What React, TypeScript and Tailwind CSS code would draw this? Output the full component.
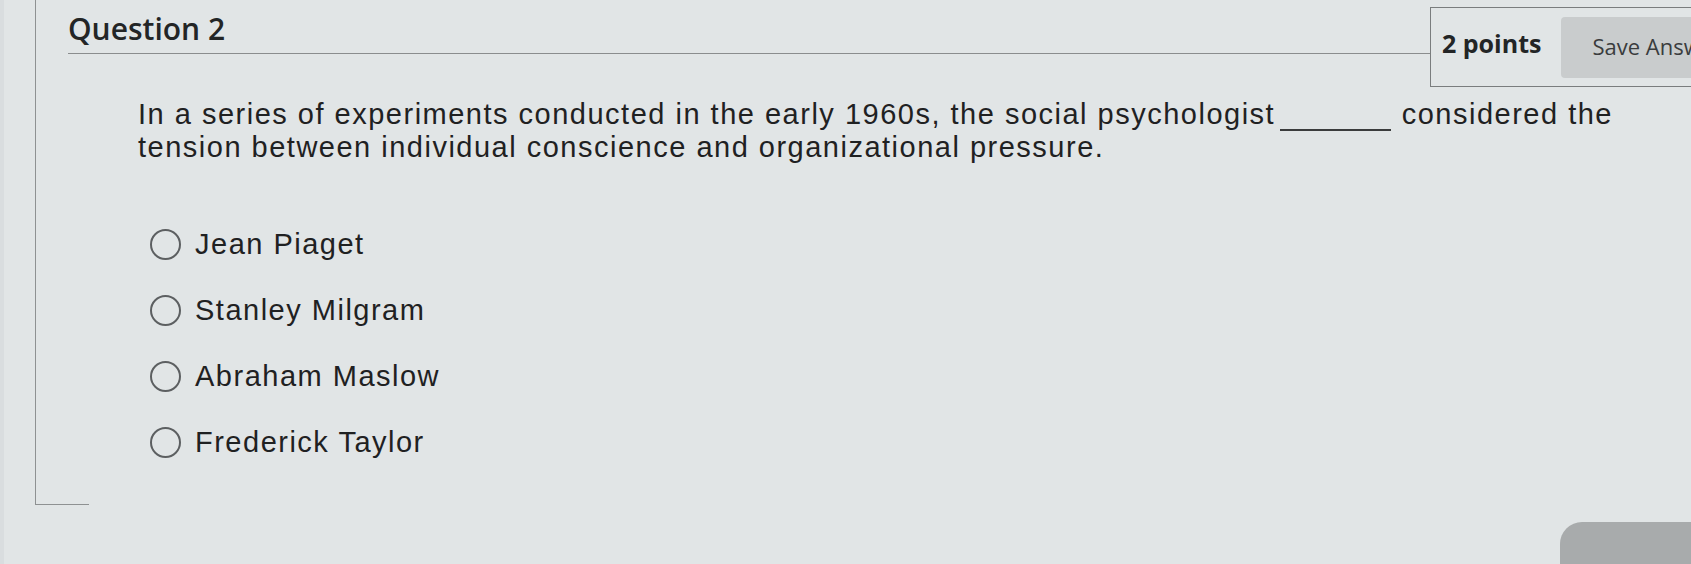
const OPTIONS = ['Jean Piaget', 'Stanley Milgram', 'Abraham Maslow', 'Frederick Taylor'];

function Option({ label }: { label: string }) {
  return (
    <label className="flex h-[66px] items-center gap-[14px] pl-[114px]">
      <span className="h-[31px] w-[31px] shrink-0 rounded-full border-2 border-[#5c5f61]" />
      <span className="text-[29px] leading-[32px] tracking-[1.5px] text-[#1f2122]">{label}</span>
    </label>
  );
}

export default function App() {
  return (
    <div className="relative flex h-[564px] w-[1691px] overflow-hidden bg-[#e1e5e6] font-['Liberation_Sans',Arial,sans-serif]">
      <div className="w-[4px] shrink-0 bg-[#d9dddf]" />

      <div className="ml-[31px] flex h-[505px] min-w-0 flex-1 flex-col border-l border-[#8e9192] pt-[7px]">
        {/* question header + points box */}
        <div className="flex items-start">
          <div className="ml-[32px] h-[47px] flex-1 border-b border-[#8a8d8e] pt-[5px]">
            <h2 className="font-['Open_Sans',sans-serif] text-[30px] font-semibold leading-[34px] text-[#232526]">
              Question 2
            </h2>
          </div>
          <div className="-mr-[40px] flex h-[80px] w-[301px] shrink-0 items-center gap-[20px] border border-[#7a7d7e] pl-[11px]">
            <span className="mb-[8px] font-['Open_Sans',sans-serif] text-[25px] font-bold leading-[32px] text-[#232526]">
              2 points
            </span>
            <button className="flex h-[61px] flex-1 items-center rounded-[4px] bg-[#c9cccd] pb-[3px] pl-[31px] font-['Open_Sans',sans-serif] text-[22px] leading-[30px] whitespace-nowrap text-[#3a3c3d]">
              Save Answer
            </button>
          </div>
        </div>

        <p className="mt-[11px] w-[1610px] pl-[102px] text-[29px] leading-[33px] tracking-[1.5px] text-[#1f2122]">
          In a series of experiments conducted in the early 1960s, the social psychologist
          <span className="-mb-[7px] ml-[5px] mr-[1px] inline-block w-[111px] border-b-2 border-[#3a3c3d]" /> considered
          the tension between individual conscience and organizational pressure.
        </p>

        <div className="mt-[47px] flex flex-col">
          {OPTIONS.map((o) => (
            <Option key={o} label={o} />
          ))}
        </div>

        <div className="mt-auto -ml-px h-px w-[54px] bg-[#8e9192]" />
      </div>

      {/* floating action button peeking in at the corner */}
      <div className="absolute -bottom-[40px] -right-[40px] h-[82px] w-[171px] rounded-[22px] bg-[#a8abac]" />
    </div>
  );
}
